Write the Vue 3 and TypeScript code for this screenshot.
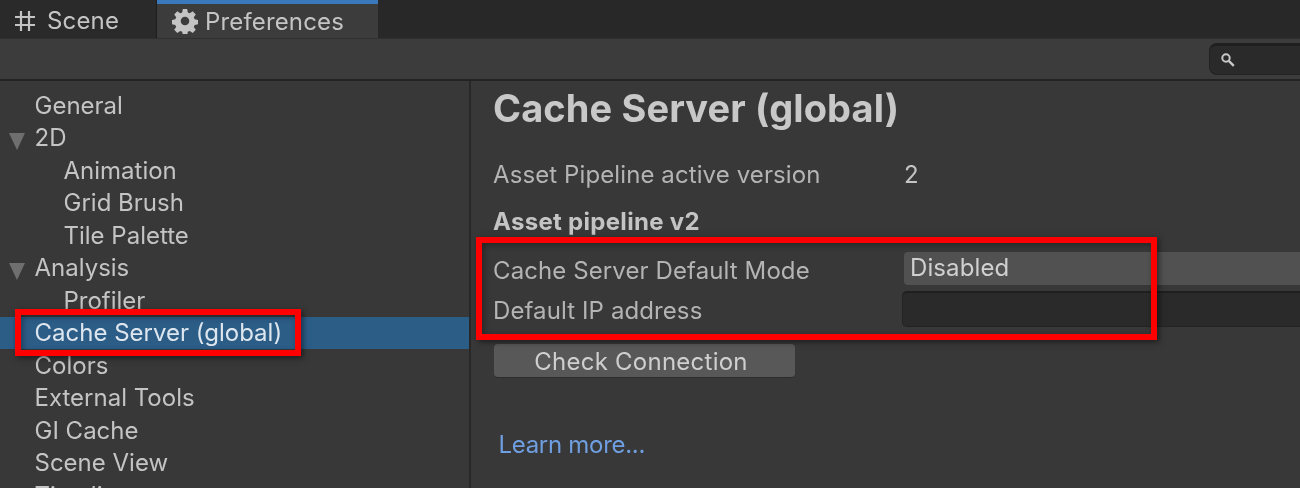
<script setup lang="ts">
interface Item { label: string; indent: number; arrow?: boolean; selected?: boolean }
const items: Item[] = [
  { label: 'General', indent: 1 },
  { label: '2D', indent: 1, arrow: true },
  { label: 'Animation', indent: 2 },
  { label: 'Grid Brush', indent: 2 },
  { label: 'Tile Palette', indent: 2 },
  { label: 'Analysis', indent: 1, arrow: true },
  { label: 'Profiler', indent: 2 },
  { label: 'Cache Server (global)', indent: 1, selected: true },
  { label: 'Colors', indent: 1 },
  { label: 'External Tools', indent: 1 },
  { label: 'GI Cache', indent: 1 },
  { label: 'Scene View', indent: 1 },
  { label: 'Timeline', indent: 1 },
]
</script>

<template>
  <div class="window">
    <div class="tabbar soft">
      <div class="tab scene">
        <svg class="ico-grid" width="22" height="22" viewBox="0 0 22 22" fill="none" stroke="#c4c4c4" stroke-width="2.2">
          <path d="M7 1v20M15 1v20M1 7h20M1 15h20" />
        </svg>
        <span>Scene</span>
      </div>
      <div class="tab active">
        <svg class="ico-gear" width="26" height="26" viewBox="0 0 26 26">
          <path fill="#c4c4c4" fill-rule="evenodd" d="M10.800 1h4.400l.6 3.400 2 .9 2.900-2 3.100 3.100-2 2.900.9 2 3.300.6v4.400l-3.300.6-.9 2 2 2.900-3.100 3.100-2.900-2-2 .9-.6 3.400h-4.400l-.6-3.400-2-.9-2.900 2-3.100-3.100 2-2.900-.9-2-3.300-.6v-4.400l3.300-.6.9-2-2-2.900 3.100-3.100 2.900 2 2-.9zM13 8.700a4.300 4.300 0 1 0 0 8.600 4.300 4.300 0 0 0 0-8.600z" />
        </svg>
        <span>Preferences</span>
      </div>
    </div>
    <div class="toolbar soft">
      <div class="search">
        <svg width="16" height="16" viewBox="0 0 16 16" fill="none" stroke="#c8c8c8">
          <circle cx="6" cy="6" r="3.700" stroke-width="2" />
          <path d="M8.800 8.800l5 5" stroke-width="2.400" />
        </svg>
      </div>
    </div>
    <div class="body soft">
      <aside class="sidebar">
        <div v-for="item in items" :key="item.label" class="row" :class="[`indent-${item.indent}`, { selected: item.selected }]">
          <i v-if="item.arrow" class="arrow"></i>
          <span>{{ item.label }}</span>
        </div>
      </aside>
      <main class="content">
        <h1>Cache Server (global)</h1>
        <div class="field version">
          <label>Asset Pipeline active version</label>
          <span>2</span>
        </div>
        <div class="subhead">Asset pipeline v2</div>
        <div class="field mode">
          <label>Cache Server Default Mode</label>
          <div class="dropdown">Disabled</div>
        </div>
        <div class="field ip">
          <label>Default IP address</label>
          <div class="input"></div>
        </div>
        <button class="check" type="button">Check Connection</button>
        <a class="learn">Learn more...</a>
      </main>
    </div>
    <div class="mark mark-a"></div>
    <div class="mark mark-b"></div>
  </div>
</template>

<style scoped>
.window {
  position: relative;
  width: 1300px;
  height: 488px;
  overflow: hidden;
  background: #383838;
  color: #c4c4c4;
  font-family: Inter, "Liberation Sans", sans-serif;
  font-size: 24px;
}
.soft { filter: blur(0.5px); }
.tabbar {
  display: flex;
  height: 38px;
  background: #282828;
  box-sizing: border-box;
  letter-spacing: 0.15px;
}
.tab {
  display: flex;
  align-items: center;
  box-sizing: border-box;
  height: 38px;
}
.scene {
  width: 157px;
  padding: 3px 0 0 14px;
  gap: 11px;
  background: #2a2a2a;
  border-right: 1px solid #1f1f1f;
}
.active {
  width: 221px;
  padding: 0 0 0 15px;
  gap: 7px;
  background: #3c3c3c;
  border-top: 4px solid #3a79bb;
}
.toolbar {
  position: relative;
  display: flex;
  justify-content: flex-end;
  align-items: center;
  box-sizing: border-box;
  height: 43px;
  background: #3c3c3c;
  border-top: 1px solid #2f2f2f;
  border-bottom: 2px solid #232323;
}
.search {
  display: flex;
  align-items: center;
  box-sizing: border-box;
  width: 91px;
  height: 32px;
  padding-left: 10px;
  background: #2a2a2a;
  border: 1px solid #222;
  border-top: 3px solid #1f1f1f;
  border-right: 0;
  border-radius: 8px 0 0 8px;
}
.body {
  display: flex;
  height: 407px;
}
.sidebar {
  box-sizing: border-box;
  width: 471px;
  flex: none;
  padding-top: 8px;
  border-right: 2px solid #282828;
}
.row {
  position: relative;
  display: flex;
  align-items: center;
  height: 32.500px;
  white-space: nowrap;
}
.indent-1 { padding-left: 34.500px; }
.indent-2 { padding-left: 63.500px; }
.selected {
  background: #2c5d87;
  color: #dde6ee;
}
.arrow {
  position: absolute;
  left: 9px;
  top: 11px;
  width: 0;
  height: 0;
  border-left: 8.500px solid transparent;
  border-right: 8.500px solid transparent;
  border-top: 17px solid #6f6f6f;
}
.content {
  flex: 1;
  min-width: 0;
  padding: 7px 0 0 22px;
}
h1 {
  margin: 0;
  height: 42px;
  font-size: 38px;
  line-height: 41px;
  font-weight: 700;
  letter-spacing: 0.1px;
  color: #c8c8c8;
}
.field {
  display: flex;
  align-items: center;
  letter-spacing: 0.1px;
}
.field label {
  flex: none;
  width: 411px;
  color: #b4b4b4;
}
.version { height: 32px; margin-top: 28px; }
.subhead {
  height: 32px;
  margin-top: 15px;
  font-weight: 700;
  line-height: 34px;
  letter-spacing: 0.3px;
}
.mode { height: 33px; margin-top: 15px; }
.mode label { padding-top: 3px; }
.ip { height: 36px; margin-top: 6px; }
.ip label { padding-top: 2px; }
.dropdown {
  flex: 1;
  box-sizing: border-box;
  height: 33px;
  padding-left: 6px;
  line-height: 32px;
  background: #515151;
  border-radius: 4px 0 0 4px;
  color: #d0d0d0;
}
.input {
  flex: 1;
  height: 36px;
  margin-left: -2px;
  box-sizing: border-box;
  background: #2a2a2a;
  border: 1px solid #232323;
  border-top: 2px solid #1f1f1f;
  border-right: 0;
  border-radius: 5px 0 0 5px;
}
.check {
  display: block;
  width: 301px;
  height: 34px;
  margin: 17px 0 0 1px;
  padding: 2px 7px 0 0;
  border: 0;
  border-bottom: 1px solid #2c2c2c;
  border-radius: 4px;
  background: #585858;
  color: #cfcfcf;
  font: inherit;
  letter-spacing: 0.25px;
}
.learn {
  display: block;
  margin: 52px 0 0 5.500px;
  color: #6f9fe0;
  letter-spacing: -0.3px;
}
.mark {
  position: absolute;
  box-sizing: border-box;
  border: 6px solid #fe0000;
  box-shadow: 2px 2px 6px rgba(0, 0, 0, 0.5), inset 2px 2px 6px rgba(0, 0, 0, 0.35);
}
.mark-a { left: 15px; top: 309px; width: 286px; height: 47px; }
.mark-b { left: 476px; top: 237px; width: 681px; height: 103px; }
</style>
